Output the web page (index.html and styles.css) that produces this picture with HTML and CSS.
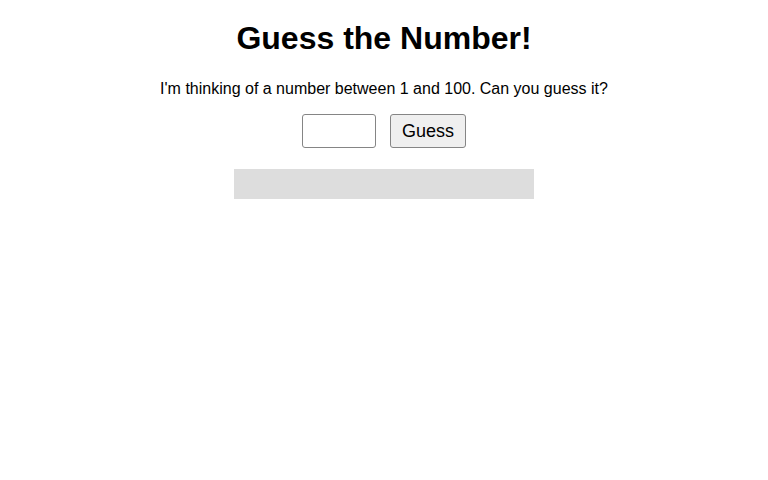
FILE: index.html
```html
<!DOCTYPE html>
<html lang="en">
<head>
    <meta charset="UTF-8">
    <meta name="viewport" content="width=device-width, initial-scale=1.0">
    <title>Guess the Number</title>
    <link rel="stylesheet" href="styles.css">
</head>
<body>
    <h1>Guess the Number!</h1>
    <p>I'm thinking of a number between 1 and 100. Can you guess it?</p>
    <div class="controls">
        <input type="number" id="guess-input">
        <button id="guess-btn">Guess</button>
    </div>
    <div id="result"></div>
</body>
</html>
```
FILE: styles.css
```css
body {
    font-family: "Liberation Sans", Arial, sans-serif;
    text-align: center;
    margin: 8px;
    color: #000;
    background: #fff;
}

h1 {
    font-size: 32px;
    margin: 12px 0 23px;
}

p {
    font-size: 16px;
    margin: 20px 0 16px;
}

.controls {
    display: flex;
    justify-content: center;
    gap: 14px;
}

.controls input {
    width: 74px;
    height: 34px;
    box-sizing: border-box;
    padding: 6px 7px;
    font-size: 16px;
    border: 1px solid #858585;
    border-radius: 3px;
}

.controls button {
    width: 76px;
    height: 34px;
    box-sizing: border-box;
    font-family: inherit;
    font-size: 18px;
    background: #efefef;
    border: 1px solid #858585;
    border-radius: 3px;
    color: #000;
}

#result {
    width: 300px;
    height: 30px;
    margin: 21px auto 0;
    background: #ddd;
}
```
